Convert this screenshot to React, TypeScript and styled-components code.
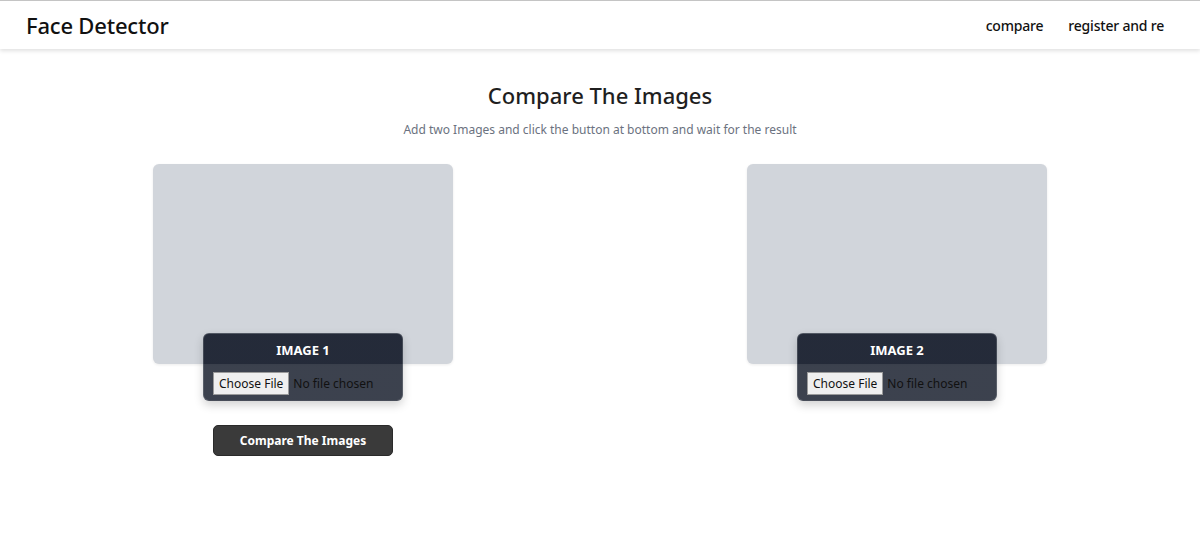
import styled, { createGlobalStyle } from "styled-components";

const GlobalStyle = createGlobalStyle`
  * { box-sizing: border-box; }
  body {
    margin: 0;
    background: #ffffff;
    font-family: "Noto Sans", "Open Sans", sans-serif;
    color: #111827;
  }
`;

const slots = ["IMAGE 1", "IMAGE 2"];

const App = () => {
  return (
    <>
      <GlobalStyle />
      <NavBar>
        <Brand>Face Detector</Brand>
        <NavLinks>
          <NavLink href="#">compare</NavLink>
          <NavLink href="#">register and re</NavLink>
        </NavLinks>
      </NavBar>
      <Main>
        <Title>Compare The Images</Title>
        <Subtitle>
          Add two Images and click the button at bottom and wait for the result
        </Subtitle>
        <Columns>
          {slots.map((label, i) => (
            <Column key={label}>
              <Preview />
              <UploadPanel>
                <PanelTitle>{label}</PanelTitle>
                <FileRow>
                  <FileInput type="file" />
                </FileRow>
              </UploadPanel>
              {i === 0 && <CompareButton>Compare The Images</CompareButton>}
            </Column>
          ))}
        </Columns>
      </Main>
    </>
  );
};

export default App;

const NavBar = styled.header`
  height: 49px;
  border-top: 1px solid #c4c4c4;
  display: flex;
  align-items: center;
  justify-content: space-between;
  padding: 0 36px 0 26px;
  box-shadow: 0 2px 4px rgba(0, 0, 0, 0.12);
`;

const Brand = styled.h1`
  margin: 0;
  font-size: 22px;
  font-weight: 500;
  color: #111;
  letter-spacing: -0.2px;
`;

const NavLinks = styled.nav`
  display: flex;
  gap: 25px;
`;

const NavLink = styled.a`
  font-size: 14px;
  font-weight: 500;
  color: #111;
  text-decoration: none;
  letter-spacing: -0.2px;
`;

const Main = styled.main`
  padding-top: 31px;
  display: flex;
  flex-direction: column;
  align-items: center;
`;

const Title = styled.h2`
  margin: 0;
  font-size: 22px;
  font-weight: 500;
  color: #1f1f1f;
  line-height: 30px;
`;

const Subtitle = styled.p`
  margin: 11px 0 0;
  font-size: 12px;
  color: #6b7280;
  line-height: 18px;
`;

const Columns = styled.div`
  width: 1188px;
  margin-top: 25px;
  display: grid;
  grid-template-columns: 1fr 1fr;
`;

const Column = styled.div`
  display: flex;
  flex-direction: column;
  align-items: center;
`;

const Preview = styled.div`
  width: 300px;
  height: 200px;
  background: #d1d5db;
  border-radius: 6px;
  box-shadow: 0 1px 3px rgba(0, 0, 0, 0.08);
`;

const UploadPanel = styled.div`
  width: 200px;
  margin-top: -31px;
  background: linear-gradient(
    to bottom,
    rgba(17, 24, 39, 0.9) 0 30px,
    rgba(17, 24, 39, 0.82) 30px
  );
  border: 1px solid rgba(255, 255, 255, 0.15);
  border-radius: 6px;
  box-shadow: 0 4px 10px rgba(0, 0, 0, 0.18);
  padding: 8px 9px 5px;
`;

const PanelTitle = styled.div`
  text-align: center;
  color: #ffffff;
  font-size: 13px;
  font-weight: 700;
  line-height: 16px;
`;

const FileRow = styled.div`
  margin-top: 13px;
`;

const FileInput = styled.input`
  font-family: "Noto Sans", sans-serif;
  font-size: 12px;
  color: #111;
  width: 180px;

  &::file-selector-button {
    font-family: "Noto Sans", sans-serif;
    font-size: 12px;
    background: #efefef;
    border: 1px solid #9a9a9a;
    border-radius: 0;
    padding: 2px 5px;
    margin-right: 4px;
    color: #111;
  }
`;

const CompareButton = styled.button`
  margin-top: 24px;
  width: 180px;
  height: 31px;
  background: #3a3a3a;
  color: #ffffff;
  border: 1px solid #2a2a2a;
  border-radius: 5px;
  font-family: "Noto Sans", sans-serif;
  font-size: 12px;
  font-weight: 700;
  cursor: pointer;
`;
